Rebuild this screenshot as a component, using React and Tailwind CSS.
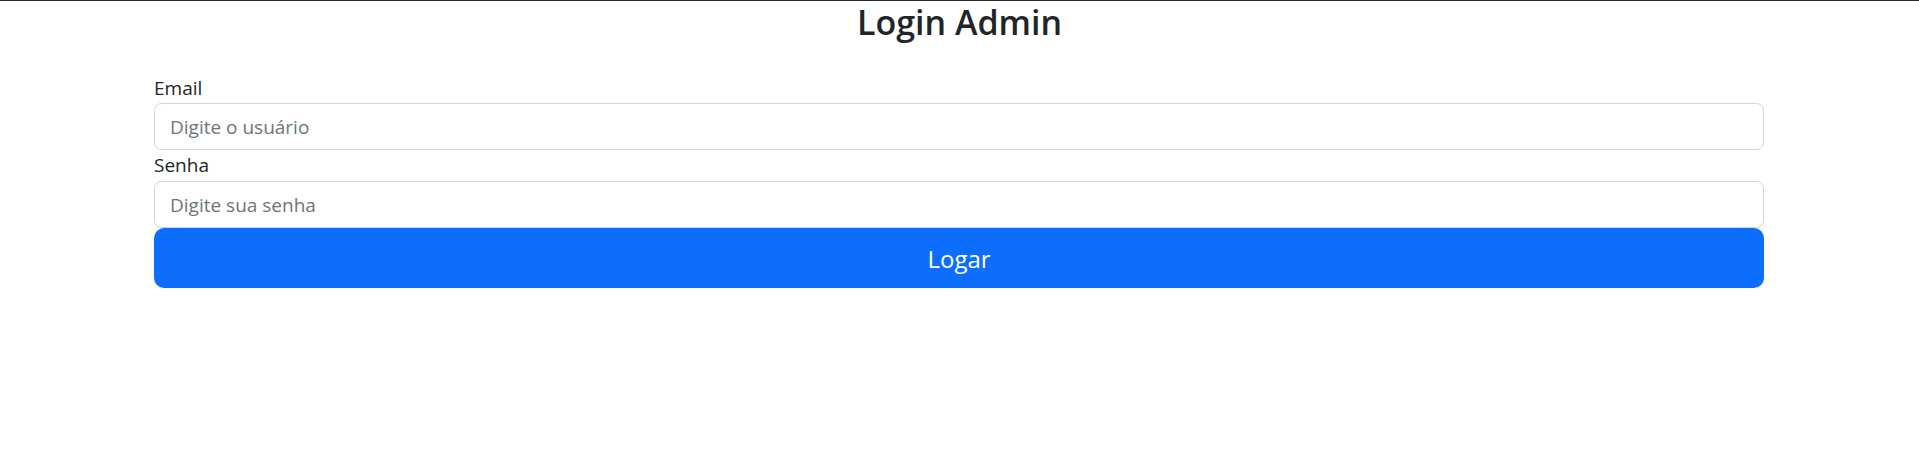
export default function App() {
  return (
    <div className="min-h-[466px] bg-white border-t border-[#212529] font-['Segoe_UI','Open_Sans',sans-serif] text-[#212529]">
      <h2 className="text-center text-[34px] leading-[42px] font-semibold mb-[30px]">Login Admin</h2>
      <form className="ml-[154px] mr-[155px] flex flex-col" onSubmit={(e) => e.preventDefault()}>
        <label className="block text-[19px] leading-[30px]">Email</label>
        <input
          type="text"
          placeholder="Digite o usuário"
          className="h-[47px] w-full rounded-[7.5px] border border-[#ced4da] px-[15px] text-[19px] text-[#212529] placeholder:text-[#6c757d] outline-none"
        />
        <label className="block text-[19px] leading-[31px]">Senha</label>
        <input
          type="password"
          placeholder="Digite sua senha"
          className="h-[47px] w-full rounded-[7.5px] border border-[#ced4da] px-[15px] text-[19px] text-[#212529] placeholder:text-[#6c757d] outline-none"
        />
        <button
          type="submit"
          className="h-[60px] w-full rounded-[10px] bg-[#0d6efd] text-white text-[24px] leading-[37px]"
        >
          Logar
        </button>
      </form>
    </div>
  );
}
